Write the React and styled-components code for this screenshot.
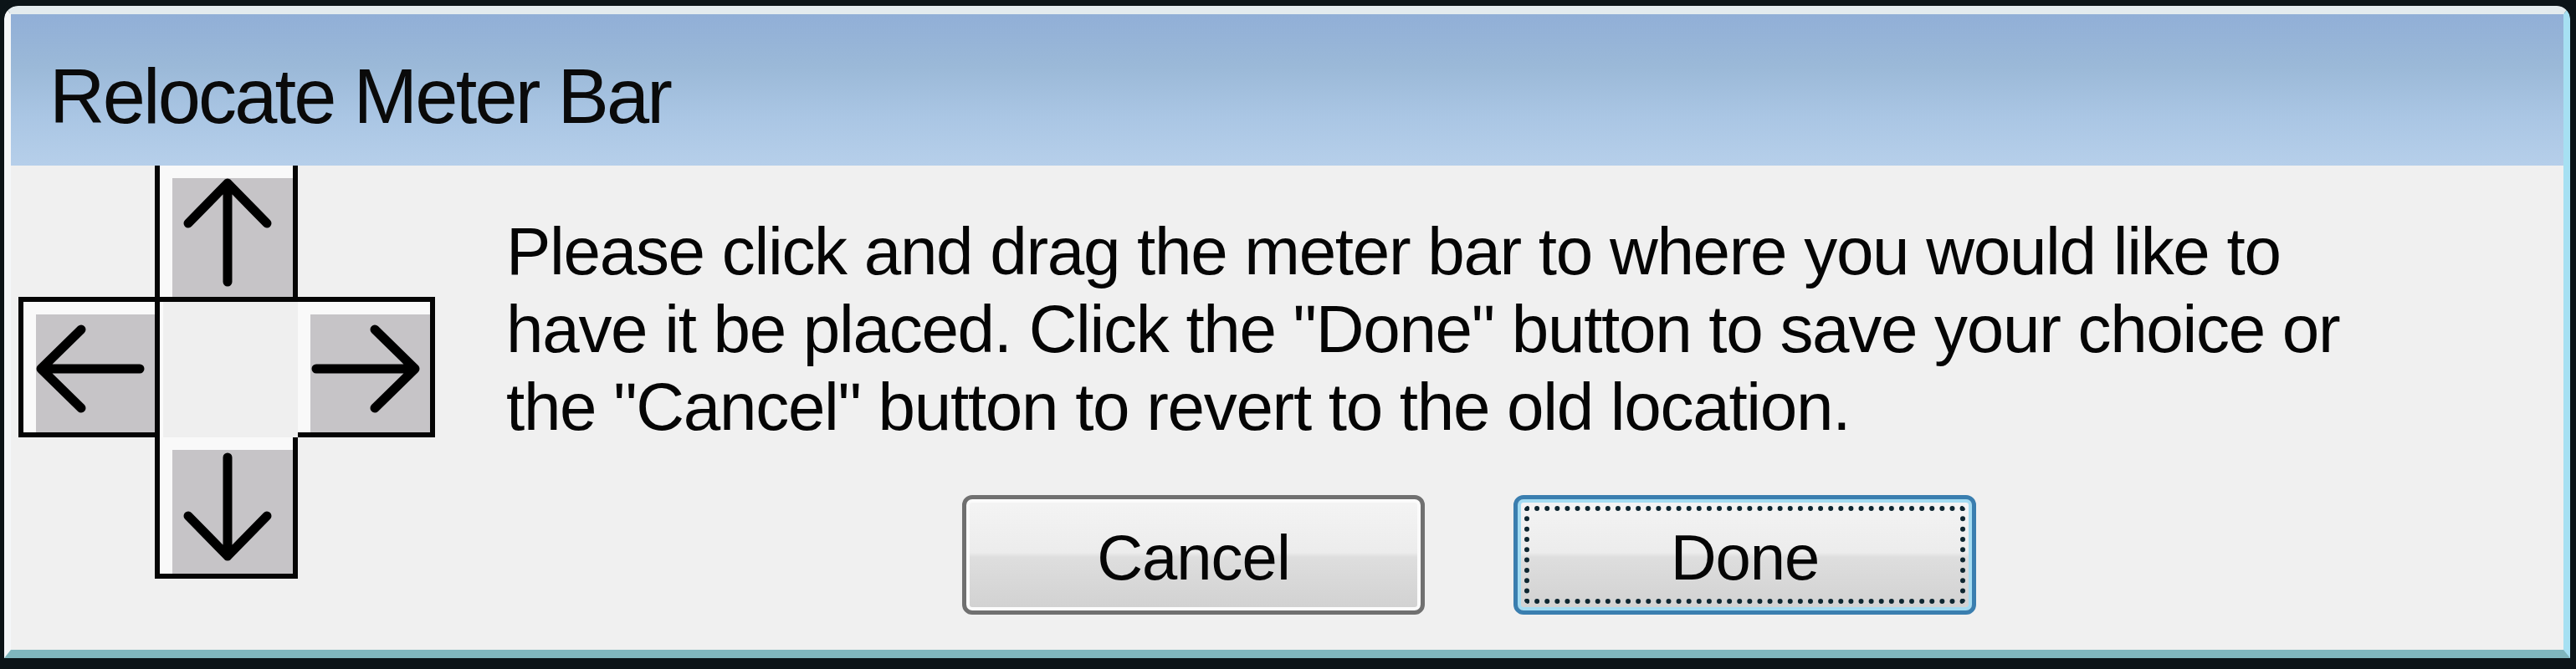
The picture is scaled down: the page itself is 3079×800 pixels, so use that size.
import styled, { createGlobalStyle } from 'styled-components'

const GlobalStyle = createGlobalStyle`
  html, body {
    margin: 0;
    padding: 0;
    background: #0c1418;
  }
`

const Window = styled.div`
  box-sizing: border-box;
  width: 3079px;
  height: 800px;
  border-style: solid;
  border-color: #0c1418;
  border-width: 7px 7px 13px 5px;
  border-radius: 22px 22px 0 0;
  overflow: hidden;
  display: flex;
`

const Frame = styled.div`
  flex: 1;
  display: flex;
  flex-direction: column;
  border-style: solid;
  border-width: 10px 8px 10px 8px;
  border-color: #e3ebee #a6e0f2 #7fb6bd #f5f7f9;
  border-radius: 16px 16px 0 0;
  background: #f0f0f0;
`

const TitleBar = styled.div`
  box-sizing: border-box;
  height: 181px;
  padding: 52px 0 0 46px;
  background: linear-gradient(180deg, #91afd7 0%, #9bb9d8 35%, #aac6e4 68%, #b6cfea 100%);
  font-family: 'Liberation Sans', Arial, sans-serif;
  font-size: 92px;
  line-height: 92px;
  letter-spacing: -2.8px;
  color: #0a0a0a;
  white-space: nowrap;
`

const Body = styled.div`
  flex: 1;
  display: flex;
  padding-left: 9px;
  background: #f0f0f0;
`

const Cross = styled.div`
  display: grid;
  grid-template-columns: 163px 171px 164px;
  grid-template-rows: 157px 168px 169px;
  align-self: flex-start;
`

const Key = styled.div`
  box-sizing: border-box;
  grid-row: ${p => p.$row};
  grid-column: ${p => p.$col};
  display: flex;
  padding: 15px 0 0 15px;
  background: #f9f9f9;
  border: 0 solid #050505;
  border-width: ${p => p.$borders};
`

const Face = styled.div`
  flex: 1;
  display: flex;
  align-items: center;
  justify-content: center;
  padding: 0 12px 12px 0;
  background: #c6c4c7;

  svg {
    flex-shrink: 0;
  }
`

const Hub = styled.div`
  box-sizing: border-box;
  grid-row: 2;
  grid-column: 2;
  background: #efefef;
  border: 0 solid #050505;
  border-width: 6px 0 0 6px;
  box-shadow: inset 4px 0 0 #fbfbfb;
`

const Content = styled.div`
  width: 2302px;
  margin-left: 85px;
  padding-top: 56px;
  display: flex;
  flex-direction: column;
`

const Message = styled.p`
  margin: 0;
  font-family: 'Liberation Sans', Arial, sans-serif;
  font-size: 80px;
  line-height: 93px;
  letter-spacing: -1.3px;
  color: #050505;
  white-space: nowrap;
`

const ButtonRow = styled.div`
  display: flex;
  justify-content: center;
  gap: 106px;
  margin-top: 59px;
`

const Button = styled.button`
  position: relative;
  box-sizing: border-box;
  width: 553px;
  height: 143px;
  padding: 6px 0 0;
  border: 5px solid ${p => (p.$focused ? '#3a7eaf' : '#707070')};
  border-radius: 12px;
  background: linear-gradient(180deg, #f4f4f4 0%, #ececec 48%, #dedede 52%, #d1d1d1 100%);
  box-shadow: inset 0 0 0 4px ${p => (p.$focused ? '#a4dcf2' : '#fbfbfb')};
  font-family: 'Liberation Sans', Arial, sans-serif;
  font-size: 76px;
  letter-spacing: -1px;
  color: #050505;

  &::after {
    content: '';
    display: ${p => (p.$focused ? 'block' : 'none')};
    position: absolute;
    inset: 8px;
    border: 6px dotted #0e2630;
    border-radius: 5px;
  }
`

const ROTATION = { up: 0, right: 90, down: 180, left: 270 }

function Arrow({ dir }) {
  return (
    <svg width="130" height="130" viewBox="0 0 130 130">
      <g
        transform={`rotate(${ROTATION[dir]} 65 65)`}
        fill="none"
        stroke="#000"
        strokeWidth="11"
        strokeLinecap="round"
        strokeLinejoin="round"
      >
        <path d="M65 6V124M18 54L65 6L112 54" />
      </g>
    </svg>
  )
}

const keys = [
  { dir: 'up', row: 1, col: 2, borders: '0 6px 0 6px' },
  { dir: 'left', row: 2, col: 1, borders: '6px 0 6px 6px' },
  { dir: 'right', row: 2, col: 3, borders: '6px 6px 6px 0' },
  { dir: 'down', row: 3, col: 2, borders: '0 6px 6px 6px' },
]

export default function App() {
  return (
    <>
      <GlobalStyle />
      <Window>
        <Frame>
          <TitleBar>Relocate Meter Bar</TitleBar>
          <Body>
            <Cross>
              {keys.map(k => (
                <Key key={k.dir} $row={k.row} $col={k.col} $borders={k.borders}>
                  <Face>
                    <Arrow dir={k.dir} />
                  </Face>
                </Key>
              ))}
              <Hub />
            </Cross>
            <Content>
              <Message>
                Please click and drag the meter bar to where you would like to
                <br />
                have it be placed. Click the "Done" button to save your choice or
                <br />
                the "Cancel" button to revert to the old location.
              </Message>
              <ButtonRow>
                <Button>Cancel</Button>
                <Button $focused>Done</Button>
              </ButtonRow>
            </Content>
          </Body>
        </Frame>
      </Window>
    </>
  )
}
